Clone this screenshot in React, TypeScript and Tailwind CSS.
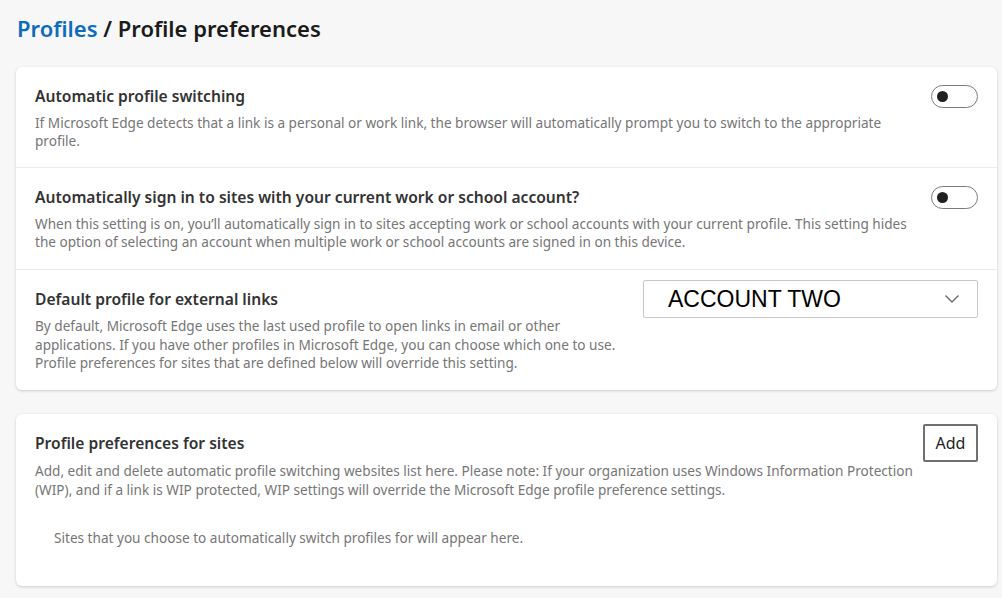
import React from "react";

const font = { fontFamily: '"Segoe UI", "Noto Sans", "Open Sans", sans-serif' };

function Toggle() {
  return (
    <div className="w-[47px] h-[23px] rounded-full border border-[#7a7a7a] bg-white flex items-center pl-[5px] shrink-0">
      <div className="w-[11px] h-[11px] rounded-full bg-[#1f1f1f]" />
    </div>
  );
}

export default function App() {
  return (
    <div className="w-[1002px] h-[598px] bg-[#f7f7f7] overflow-hidden" style={font}>
      <div className="pl-[17px] pt-[12px] h-[67px]">
        <h1 className="text-[22px] font-semibold leading-[32px] text-[#1b1b1b]">
          <span className="text-[#0f6cbd]">Profiles</span> / Profile preferences
        </h1>
      </div>
      <div className="ml-[16px] mr-[5px] bg-white rounded-[6px] shadow-[0_1px_3px_rgba(0,0,0,0.18)]">
        <div className="flex justify-between pl-[19px] pr-[19px] pt-[18px] h-[101px] border-b border-[#ebebeb]">
          <div className="w-[870px]">
            <div className="text-[15.6px] font-semibold text-[#333] leading-[22px]">Automatic profile switching</div>
            <div className="text-[13.6px] text-[#767676] leading-[18px] mt-[7px]">
              If Microsoft Edge detects that a link is a personal or work link, the browser will automatically prompt you to switch to the appropriate profile.
            </div>
          </div>
          <Toggle />
        </div>
        <div className="flex justify-between pl-[19px] pr-[19px] pt-[18px] h-[102px] border-b border-[#ebebeb]">
          <div className="w-[875px]">
            <div className="text-[15.6px] font-semibold text-[#333] leading-[22px]">Automatically sign in to sites with your current work or school account?</div>
            <div className="text-[13.6px] text-[#767676] leading-[18px] mt-[7px]">
              When this setting is on, you’ll automatically sign in to sites accepting work or school accounts with your current profile. This setting hides the option of selecting an account when multiple work or school accounts are signed in on this device.
            </div>
          </div>
          <Toggle />
        </div>
        <div className="flex justify-between pl-[19px] pr-[19px] pt-[10px] h-[120px]">
          <div className="w-[590px] pt-[8px]">
            <div className="text-[15.6px] font-semibold text-[#333] leading-[22px]">Default profile for external links</div>
            <div className="text-[13.6px] text-[#767676] leading-[18.5px] mt-[7px]">
              By default, Microsoft Edge uses the last used profile to open links in email or other applications. If you have other profiles in Microsoft Edge, you can choose which one to use. Profile preferences for sites that are defined below will override this setting.
            </div>
          </div>
          <div className="w-[335px] h-[38px] border border-[#c8c8c8] rounded-[2px] flex items-center justify-between pl-[24px] pr-[17px] shrink-0">
            <span className="text-[23px] text-black leading-none" style={{ fontFamily: '"Liberation Sans", Arial, sans-serif' }}>ACCOUNT TWO</span>
            <svg width="16" height="10" viewBox="0 0 16 10" fill="none">
              <path d="M1.5 1.5 L8 8 L14.5 1.5" stroke="#6b6b6b" strokeWidth="1.4" />
            </svg>
          </div>
        </div>
      </div>
      <div className="ml-[16px] mr-[5px] mt-[24px] bg-white rounded-[6px] shadow-[0_1px_3px_rgba(0,0,0,0.18)] h-[172px] pl-[19px] pr-[19px] pt-[10px]">
        <div className="flex justify-between">
          <div className="w-[880px] pt-[8px]">
            <div className="text-[15.6px] font-semibold text-[#333] leading-[22px]">Profile preferences for sites</div>
            <div className="text-[13.6px] text-[#767676] leading-[19px] mt-[7px]">
              Add, edit and delete automatic profile switching websites list here. Please note: If your organization uses Windows Information Protection (WIP), and if a link is WIP protected, WIP settings will override the Microsoft Edge profile preference settings.
            </div>
          </div>
          <button className="w-[55px] h-[38px] border-2 border-[#707070] rounded-[2px] text-[16px] text-[#222] shrink-0 bg-white">Add</button>
        </div>
        <div className="text-[13.6px] text-[#767676] leading-[18px] pl-[19px] mt-[30px]">
          Sites that you choose to automatically switch profiles for will appear here.
        </div>
      </div>
    </div>
  );
}
